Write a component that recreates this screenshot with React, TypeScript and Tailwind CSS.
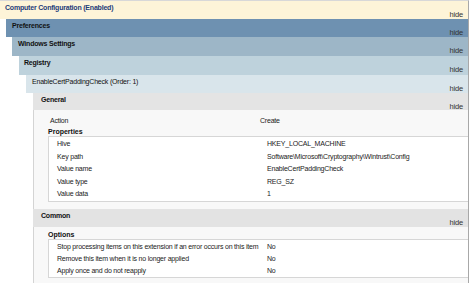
import type { ReactNode } from "react";

type BarProps = {
  title: string;
  className: string;
  titleClassName?: string;
};

function Bar({ title, className, titleClassName = "text-[#111]" }: BarProps) {
  return (
    <div className={`flex flex-col ${className}`}>
      <div className={`pt-[3px] text-[7px] font-bold leading-[8px] ${titleClassName}`}>
        {title}
      </div>
      <div className="-mt-[1px] pr-[5px] text-right text-[7.5px] leading-[8px] tracking-[-0.2px] text-[#333]">
        hide
      </div>
    </div>
  );
}

type Row = [string, string];

function PropBox({ rows, rowClass }: { rows: Row[]; rowClass: string }) {
  return (
    <div className="ml-[14px] border-y border-l border-[#d6d6d6] bg-white pt-[1px]">
      {rows.map(([label, value]) => (
        <div key={label} className={`flex ${rowClass}`}>
          <span className="w-[218px] shrink-0 pl-[8px] whitespace-nowrap">{label}</span>
          <span className="whitespace-nowrap">{value}</span>
        </div>
      ))}
    </div>
  );
}

function Indent({ px, children }: { px: string; children: ReactNode }) {
  return <div className={px}>{children}</div>;
}

const properties: Row[] = [
  ["Hive", "HKEY_LOCAL_MACHINE"],
  ["Key path", "Software\\Microsoft\\Cryptography\\Wintrust\\Config"],
  ["Value name", "EnableCertPaddingCheck"],
  ["Value type", "REG_SZ"],
  ["Value data", "1"],
];

const options: Row[] = [
  ["Stop processing items on this extension if an error occurs on this item", "No"],
  ["Remove this item when it is no longer applied", "No"],
  ["Apply once and do not reapply", "No"],
];

export default function App() {
  return (
    <div
      className="h-[283px] w-[474px] overflow-hidden bg-white text-[7px] tracking-[-0.2px] text-[#222]"
      style={{ fontFamily: '"Liberation Sans", Arial, sans-serif' }}
    >
      <div className="w-[469px] border-t border-r border-t-[#d8d8d8] border-r-[#a8a8a8]">
        <Bar
          title="Computer Configuration (Enabled)"
          className="h-[18px] bg-[#fdf4d8] pl-[5px]"
          titleClassName="text-[#1e3c78]"
        />
        <Indent px="ml-[6px]">
          <Bar title="Preferences" className="h-[18px] bg-[#6e91b1] pl-[6px]" />
          <Indent px="ml-[6px]">
            <Bar title="Windows Settings" className="h-[19px] bg-[#9db6c7] pl-[6px]" />
            <Indent px="ml-[7px]">
              <Bar title="Registry" className="h-[19px] bg-[#bed2dc] pl-[5px]" />
              <Indent px="ml-[7px]">
                <Bar
                  title="EnableCertPaddingCheck (Order: 1)"
                  className="h-[18px] bg-[#d9e5eb] pl-[6px]"
                  titleClassName="text-[#111] font-normal"
                />
                <Indent px="ml-[7px]">
                  <Bar title="General" className="h-[17px] bg-[#e4e4e4] pl-[8px]" />
                  <div className="border-l border-[#d4d4d4] bg-[#f8f8f8] pt-[5px] pb-[7.5px]">
                    <div className="flex leading-[12px]">
                      <span className="w-[226px] shrink-0 pl-[16px]">Action</span>
                      <span>Create</span>
                    </div>
                    <div className="pl-[14px] font-bold leading-[9px] tracking-normal text-[#111]">
                      Properties
                    </div>
                    <PropBox rows={properties} rowClass="leading-[12.5px]" />
                  </div>
                  <Bar title="Common" className="h-[18px] bg-[#e3e3e3] pl-[8px]" />
                  <div className="h-[60px] border-l border-[#d4d4d4] bg-[#f8f8f8] pt-[4px]">
                    <div className="pl-[14px] font-bold leading-[8px] tracking-normal text-[#111]">
                      Options
                    </div>
                    <div className="pb-[2px]">
                      <PropBox rows={options} rowClass="leading-[12px]" />
                    </div>
                  </div>
                </Indent>
              </Indent>
            </Indent>
          </Indent>
        </Indent>
      </div>
    </div>
  );
}
